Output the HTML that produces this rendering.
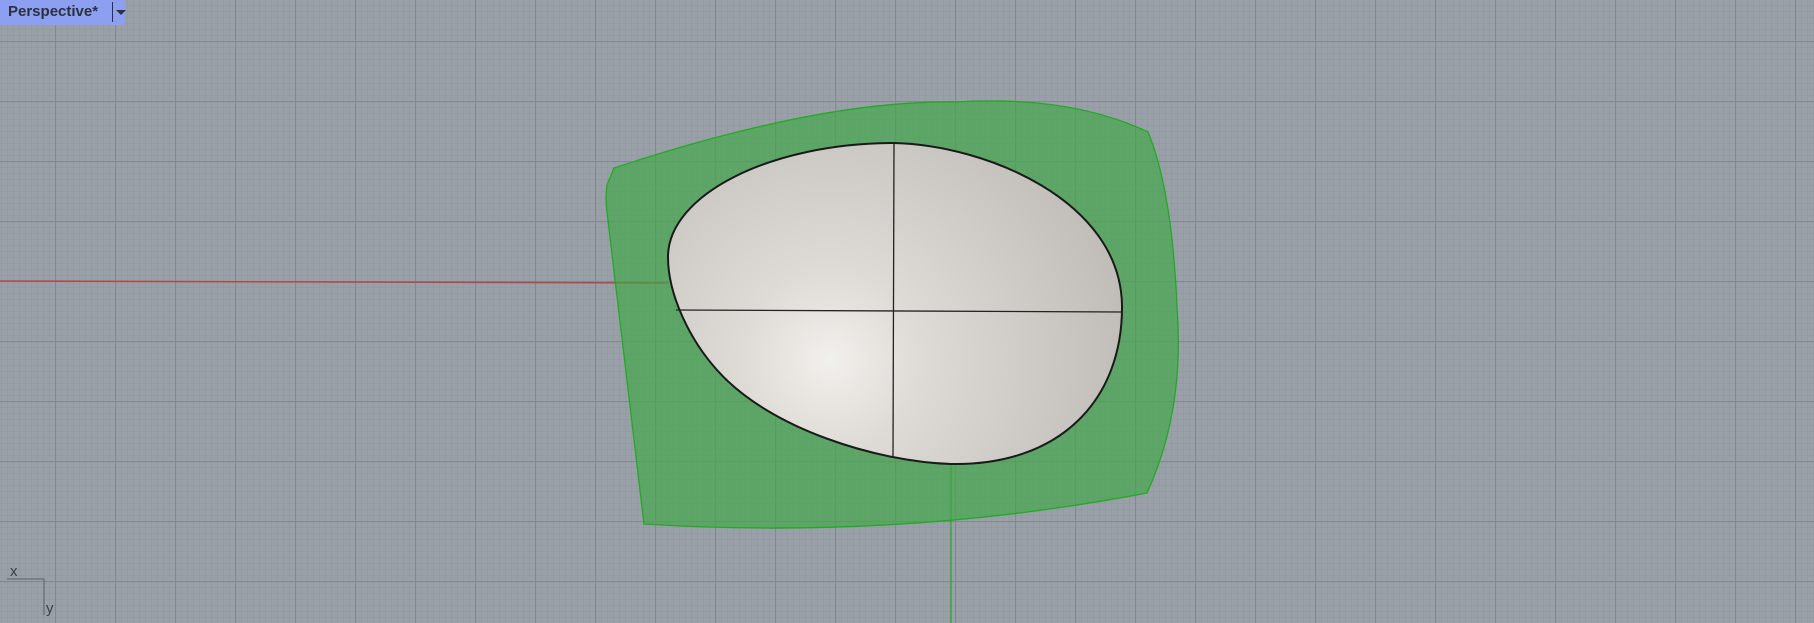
<!DOCTYPE html>
<html><head><meta charset="utf-8"><style>
html,body{margin:0;padding:0;width:1814px;height:623px;overflow:hidden;background:#9aa0a8}
svg{position:absolute;left:0;top:0}
.tab{position:absolute;left:0;top:0;width:125px;height:25px;background:#8c9ff0;border-bottom-right-radius:3px;font-family:"Liberation Sans",sans-serif;font-weight:bold;font-size:15px;color:#2c3040;line-height:24px}
.tab span{position:absolute;left:8px;top:0}
.tab i{position:absolute;left:112px;top:2px;width:1px;height:20px;background:#2c3040}
.tab b{position:absolute;left:116px;top:10px;width:0;height:0;border-left:5px solid transparent;border-right:5px solid transparent;border-top:5px solid #2c3040}
.lbl{position:absolute;font-family:"Liberation Sans",sans-serif;font-size:15px;color:#3a3e48}
</style></head><body>
<svg width="1814" height="623" viewBox="0 0 1814 623">
<defs>
<pattern id="minor" x="1" y="5" width="6" height="6" patternUnits="userSpaceOnUse">
<path d="M0 0H6M0 0V6" stroke="#9096a0" stroke-width="1" fill="none"/>
</pattern>
<pattern id="major" x="55" y="41" width="60" height="60" patternUnits="userSpaceOnUse">
<path d="M0 0.5H60M0.5 0V60" stroke="#848892" stroke-width="1.3" fill="none"/>
</pattern>
<radialGradient id="sh" cx="830" cy="360" r="300" gradientUnits="userSpaceOnUse">
<stop offset="0" stop-color="#f2f0ec"/>
<stop offset="0.3" stop-color="#dedbd6"/>
<stop offset="1" stop-color="#c0bdb8"/>
</radialGradient>
</defs>
<rect width="1814" height="623" fill="#9aa0a8"/>
<rect width="1814" height="623" fill="url(#minor)"/>
<rect width="1814" height="623" fill="url(#major)"/>
<line x1="0" y1="281" x2="668" y2="283" stroke="#b04a4a" stroke-width="1.5"/>
<line x1="951" y1="462" x2="951" y2="623" stroke="#22aa22" stroke-width="1.2"/>
<path d="M614 168 L607 185 Q605 198 607 212 L644 524 Q900 540 1147 493 Q1185 410 1177 307 Q1172 190 1148 132 Q1070 95 955 102 Q820 100 614 168 Z" fill="#3aaa40" fill-opacity="0.62" stroke="#22aa22" stroke-width="1.3"/>
<path d="M894 143 C985 145 1120 200 1122 305 C1123 400 1060 466 951 464 C880 462 770 430 717 370 C690 340 668 295 668 257 C668 195 770 143 894 143 Z" fill="url(#sh)" stroke="#1a1a1a" stroke-width="2"/>
<line x1="894" y1="144" x2="893" y2="456" stroke="#222" stroke-width="1.3"/>
<line x1="676" y1="310" x2="1122" y2="312" stroke="#222" stroke-width="1.3"/>
<path d="M7 579H44V615" stroke="#6a6e78" stroke-width="1.3" fill="none"/>
</svg>
<div class="tab"><span>Perspective*</span><i></i><b></b></div>
<div class="lbl" style="left:10px;top:563px">x</div>
<div class="lbl" style="left:46px;top:600px">y</div>
</body></html>
